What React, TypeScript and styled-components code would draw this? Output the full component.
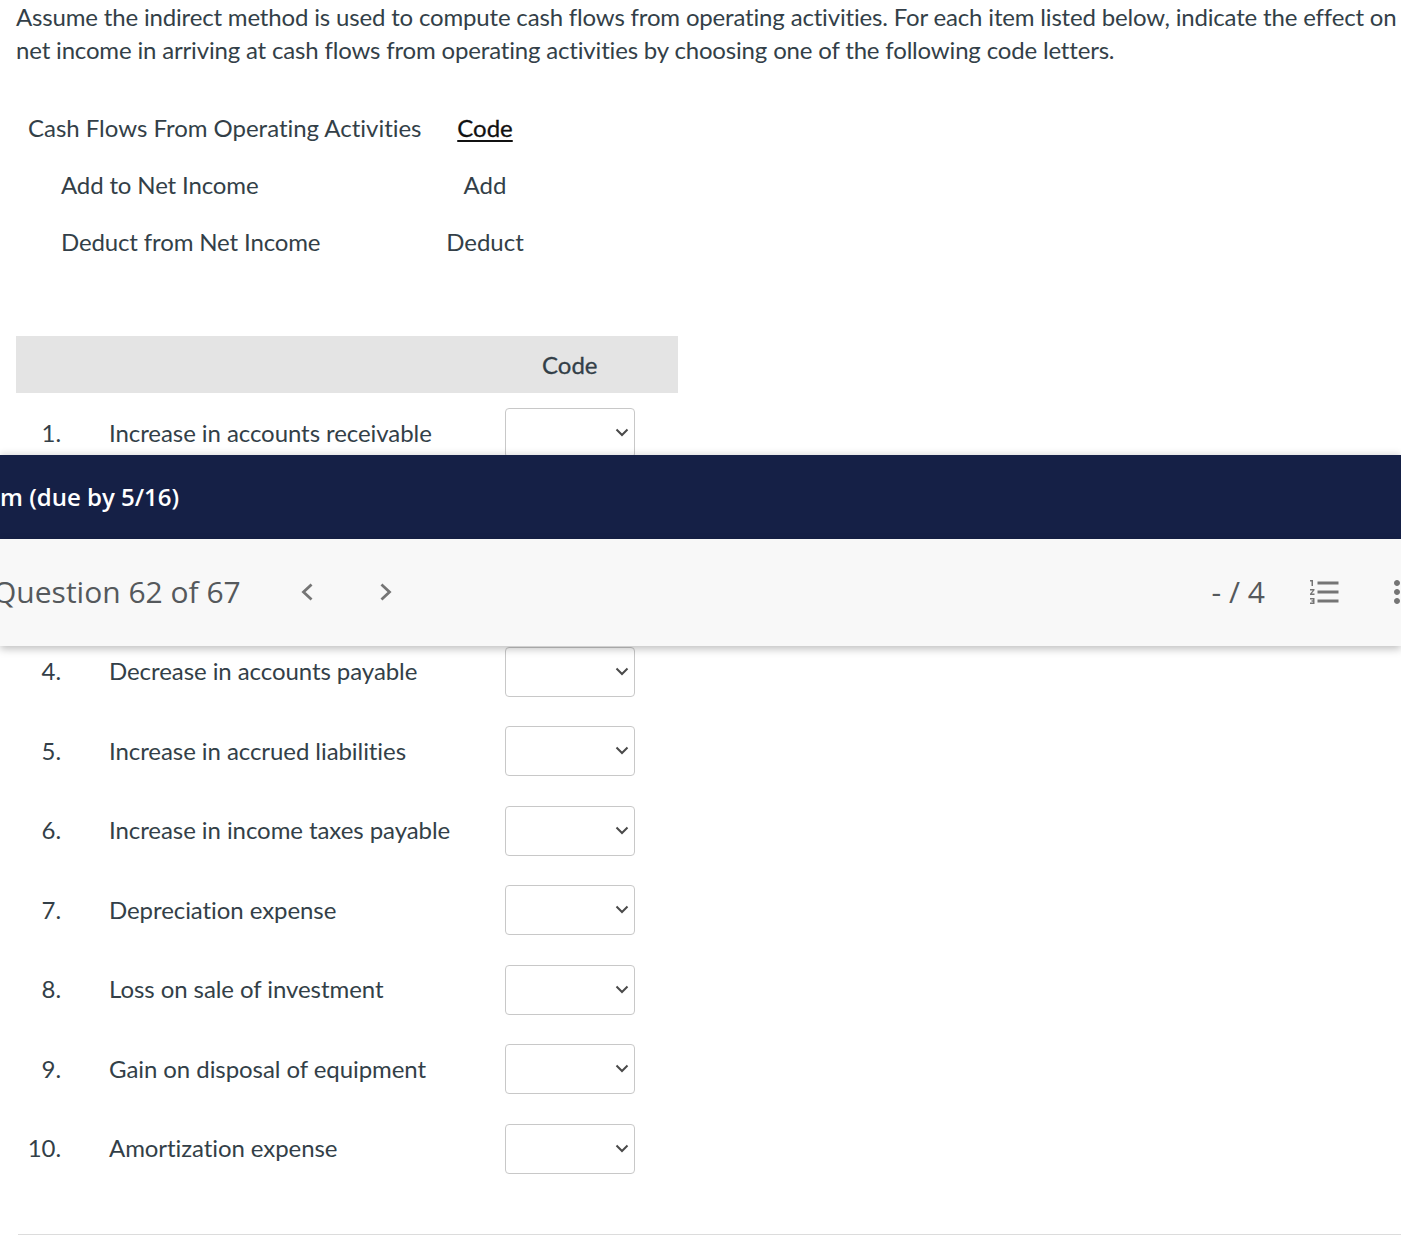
import React from 'react';
import styled, { createGlobalStyle } from 'styled-components';

const items = [
  'Increase in accounts receivable',
  '',
  '',
  'Decrease in accounts payable',
  'Increase in accrued liabilities',
  'Increase in income taxes payable',
  'Depreciation expense',
  'Loss on sale of investment',
  'Gain on disposal of equipment',
  'Amortization expense',
];

export default function App() {
  return (
    <>
      <GlobalStyle />
      <Page>
        <Intro>
          Assume the indirect method is used to compute cash flows from operating activities. For each item listed below, indicate the effect on net income in arriving at cash flows from operating activities by choosing one of the following code letters.
        </Intro>
        <Legend>
          <LegendRow>
            <LegendName>Cash Flows From Operating Activities</LegendName>
            <LegendCode $head>Code</LegendCode>
          </LegendRow>
          <LegendRow>
            <LegendName $indent>Add to Net Income</LegendName>
            <LegendCode>Add</LegendCode>
          </LegendRow>
          <LegendRow>
            <LegendName $indent>Deduct from Net Income</LegendName>
            <LegendCode>Deduct</LegendCode>
          </LegendRow>
        </Legend>
        <TableHead>
          <span>Code</span>
        </TableHead>
        <Rows>
          {items.map((label, i) => (
            <Row key={i}>
              <Num>{i + 1}.</Num>
              <Label>{label}</Label>
              <SelectWrap>
                <CodeSelect aria-label={`Code ${i + 1}`} defaultValue="">
                  <option value=""></option>
                  <option value="add">Add</option>
                  <option value="deduct">Deduct</option>
                </CodeSelect>
                <Chevron viewBox="0 0 14 9">
                  <path d="M1.5 1.5 7 7l5.5-5.5" />
                </Chevron>
              </SelectWrap>
            </Row>
          ))}
        </Rows>
        <Divider />
        <StickyBars>
          <TitleBar>
            <span>m (due by 5/16)</span>
          </TitleBar>
          <Toolbar>
            <QuestionCount>Question 62 of 67</QuestionCount>
            <Pager>
              <svg width="24" height="24" viewBox="0 0 24 24" fill="none" stroke="#757575" strokeWidth="2.8" strokeLinecap="square">
                <path d="M15.5 5.5 8.5 12l7 6.5" />
              </svg>
              <svg width="24" height="24" viewBox="0 0 24 24" fill="none" stroke="#757575" strokeWidth="2.8" strokeLinecap="square">
                <path d="M8.5 5.5l7 6.5-7 6.5" />
              </svg>
            </Pager>
            <Score>- / 4</Score>
            <ListIcon viewBox="0 0 24 24">
              <path d="M2 17h2v.5H3v1h1v.5H2v1h3v-4H2v1zm1-9h1V4H2v1h1v3zm-1 3h1.8L2 13.1v.9h3v-1H3.2L5 10.9V10H2v1zm5-6v2h14V5H7zm0 14h14v-2H7v2zm0-6h14v-2H7v2z" />
            </ListIcon>
            <MoreIcon viewBox="0 0 24 24">
              <path d="M12 8c1.1 0 2-.9 2-2s-.9-2-2-2-2 .9-2 2 .9 2 2 2zm0 2c-1.1 0-2 .9-2 2s.9 2 2 2 2-.9 2-2-.9-2-2-2zm0 6c-1.1 0-2 .9-2 2s.9 2 2 2 2-.9 2-2-.9-2-2-2z" />
            </MoreIcon>
          </Toolbar>
        </StickyBars>
      </Page>
    </>
  );
}

const GlobalStyle = createGlobalStyle`
  html, body {
    margin: 0;
    padding: 0;
    background: #fff;
    overflow-x: hidden;
  }
  body {
    font-family: Lato, "Liberation Sans", sans-serif;
    color: #333f48;
  }
`;

const Page = styled.div`
  position: relative;
  width: 1401px;
  height: 1235px;
  overflow: hidden;
  padding-left: 16px;
  box-sizing: border-box;
`;

const Intro = styled.p`
  margin: 0;
  width: 1385px;
  font-size: 24px;
  line-height: 33px;
  letter-spacing: -0.17px;
`;

const Legend = styled.div`
  margin-top: 33px;
  padding-left: 12px;
  display: flex;
  flex-direction: column;
`;

const LegendRow = styled.div`
  display: flex;
  height: 57px;
  align-items: center;
  font-size: 24px;
`;

const LegendName = styled.div<{ $indent?: boolean }>`
  width: 402px;
  padding-left: ${(p) => (p.$indent ? '33px' : '0')};
  box-sizing: border-box;
  letter-spacing: ${(p) => (p.$indent ? '-0.14px' : '-0.02px')};
  white-space: nowrap;
`;

const LegendCode = styled.div<{ $head?: boolean }>`
  width: 110px;
  text-align: center;
  color: ${(p) => (p.$head ? '#111' : 'inherit')};
  -webkit-text-stroke: ${(p) => (p.$head ? '0.3px' : '0')};
  text-decoration: ${(p) => (p.$head ? 'underline' : 'none')};
  text-underline-offset: 3px;
`;

const TableHead = styled.div`
  margin-top: 66px;
  width: 662px;
  height: 57px;
  background: #e4e4e4;
  display: flex;
  align-items: center;
  font-size: 24px;
  -webkit-text-stroke: 0.3px;
  padding-bottom: 1px;
  box-sizing: border-box;

  span {
    margin-left: 526px;
  }
`;

const Rows = styled.div`
  margin-top: 15px;
  display: flex;
  flex-direction: column;
  gap: 29.5px;
`;

const Row = styled.div`
  display: flex;
  align-items: center;
  height: 50px;
  font-size: 24px;
  letter-spacing: -0.07px;
`;

const Num = styled.div`
  width: 45px;
  text-align: right;
  padding-bottom: 2px;
`;

const Label = styled.div`
  margin-left: 48px;
  width: 396px;
  padding-bottom: 2px;
  white-space: nowrap;
`;

const SelectWrap = styled.div`
  position: relative;
  width: 130px;
  height: 50px;
`;

const CodeSelect = styled.select`
  appearance: none;
  display: block;
  width: 100%;
  height: 100%;
  box-sizing: border-box;
  border: 1px solid #c8c8c8;
  border-radius: 4px;
  background: #fff;
  color: #333f48;
  font-family: inherit;
  font-size: 20px;
`;

const Chevron = styled.svg`
  position: absolute;
  right: 6px;
  top: 20px;
  width: 14px;
  height: 9px;
  fill: none;
  stroke: #4a4a4a;
  stroke-width: 2;
  pointer-events: none;
`;

const Divider = styled.div`
  margin-top: 60px;
  height: 1px;
  background: #dcdcdc;
  margin-left: 2px;
`;

const StickyBars = styled.div`
  position: absolute;
  top: 455px;
  left: 0;
  width: 1401px;
  font-family: "Open Sans", "Liberation Sans", sans-serif;
`;

const TitleBar = styled.div`
  height: 84px;
  padding-bottom: 2px;
  box-sizing: border-box;
  background: #152046;
  color: #fff;
  display: flex;
  align-items: center;
  font-size: 24px;
  font-weight: 600;
  box-shadow: 0 -2px 6px rgba(0, 0, 0, 0.12);
  white-space: nowrap;
`;

const Toolbar = styled.div`
  height: 107px;
  padding-bottom: 1px;
  box-sizing: border-box;
  background: #f8f8f8;
  display: flex;
  align-items: center;
  overflow: hidden;
  box-shadow: 0 3px 8px rgba(0, 0, 0, 0.25);
  color: #55595c;
`;

const QuestionCount = styled.div`
  margin-left: -7px;
  margin-top: -1px;
  font-size: 30px;
  white-space: nowrap;
  width: 302px;
`;

const Pager = styled.div`
  display: flex;
  gap: 54.5px;
`;

const Score = styled.div`
  margin-left: auto;
  margin-top: -1px;
  font-size: 30px;
  white-space: nowrap;
`;

const ListIcon = styled.svg`
  width: 36px;
  height: 36px;
  flex-shrink: 0;
  margin-left: 42px;
  fill: #757575;
`;

const MoreIcon = styled.svg`
  width: 36px;
  height: 36px;
  flex-shrink: 0;
  margin-left: 36px;
  margin-right: -14px;
  fill: #757575;
`;
